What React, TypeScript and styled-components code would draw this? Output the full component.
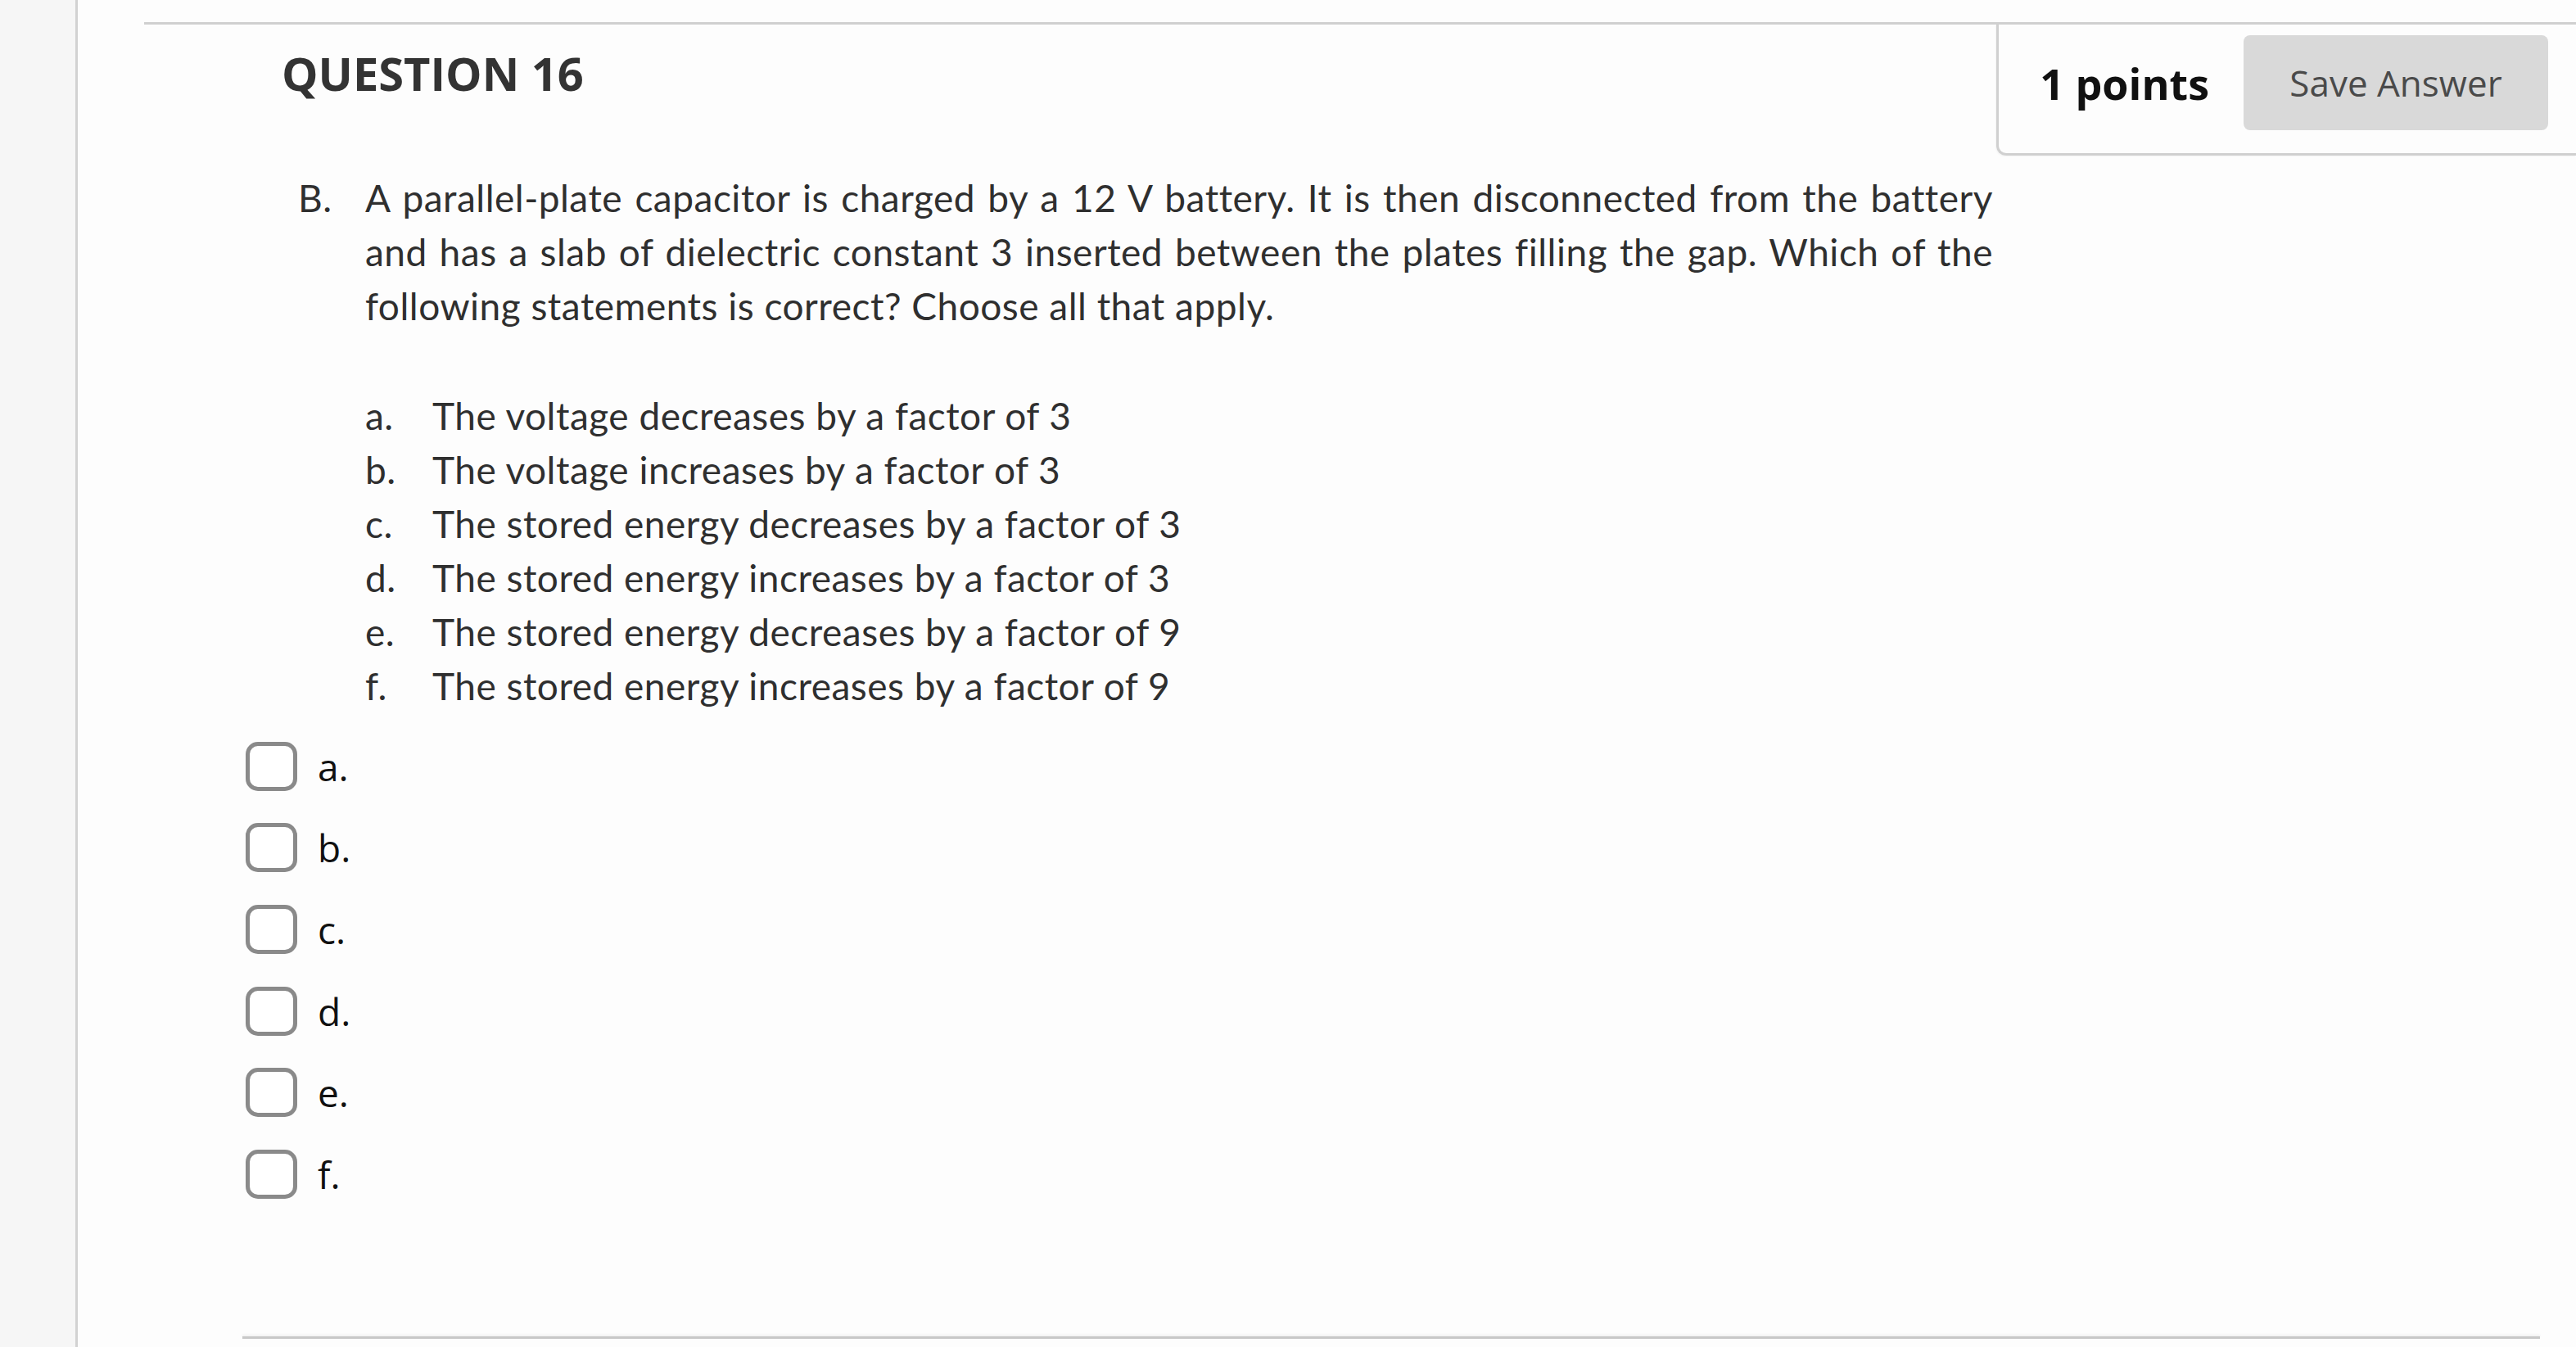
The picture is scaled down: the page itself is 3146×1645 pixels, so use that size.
import React from "react";
import styled, { createGlobalStyle } from "styled-components";

const statements = [
  { mark: "a.", text: "The voltage decreases by a factor of 3" },
  { mark: "b.", text: "The voltage increases by a factor of 3" },
  { mark: "c.", text: "The stored energy decreases by a factor of 3" },
  { mark: "d.", text: "The stored energy increases by a factor of 3" },
  { mark: "e.", text: "The stored energy decreases by a factor of 9" },
  { mark: "f.", text: "The stored energy increases by a factor of 9" },
];

const questionLines = [
  "A parallel-plate capacitor is charged by a 12 V battery. It is then disconnected from the battery",
  "and has a slab of dielectric constant 3 inserted between the plates filling the gap. Which of the",
  "following statements is correct? Choose all that apply.",
];

const choices = ["a.", "b.", "c.", "d.", "e.", "f."];

const App: React.FC = () => {
  return (
    <>
      <GlobalStyle />
      <Page>
        <Sidebar />
        <Main>
          <Panel>
            <Header>
              <Title>QUESTION 16</Title>
              <PointsBox>
                <Points>1 points</Points>
                <SaveButton type="button">Save Answer</SaveButton>
              </PointsBox>
            </Header>

            <Prompt>
              <Marker>B.</Marker>
              <PromptText>
                {questionLines.map((line, i) => (
                  <Line key={line} $justify={i < questionLines.length - 1}>
                    {line}
                  </Line>
                ))}
              </PromptText>
            </Prompt>

            <Statements>
              {statements.map((s) => (
                <StatementRow key={s.mark}>
                  <Marker>{s.mark}</Marker>
                  <span>{s.text}</span>
                </StatementRow>
              ))}
            </Statements>

            <Choices>
              {choices.map((c) => (
                <Choice key={c}>
                  <Box type="checkbox" aria-label={c} />
                  <ChoiceLabel>{c}</ChoiceLabel>
                </Choice>
              ))}
            </Choices>
          </Panel>
          <BottomRule />
        </Main>
      </Page>
    </>
  );
};

export default App;

const GlobalStyle = createGlobalStyle`
  html, body {
    margin: 0;
    padding: 0;
    height: 100%;
    overflow: hidden;
    background: #fdfdfd;
  }
  #root {
    height: 100%;
  }
`;

const Page = styled.div`
  display: flex;
  height: 100vh;
  font-family: "Open Sans", sans-serif;
`;

const Sidebar = styled.div`
  width: 92px;
  flex-shrink: 0;
  background: #f6f6f6;
  border-right: 3px solid #d2d2d2;
`;

const Main = styled.div`
  flex: 1;
  display: flex;
  flex-direction: column;
  background: #fdfdfd;
`;

const Panel = styled.div`
  margin: 27px 0 0 81px;
  border-top: 3px solid #d0d0d0;
`;

const Header = styled.div`
  display: flex;
  justify-content: space-between;
  align-items: flex-start;
`;

const Title = styled.h2`
  margin: 0;
  padding: 27px 0 0 168px;
  font-size: 56px;
  line-height: 64px;
  font-weight: 700;
  color: #333;
`;

const PointsBox = styled.div`
  display: flex;
  align-items: center;
  gap: 42px;
  padding: 13px 34px 28px 50px;
  border-left: 3px solid #d0d0d0;
  border-bottom: 3px solid #d0d0d0;
  border-bottom-left-radius: 12px;
  box-shadow: -1px 1px 2px rgba(0, 0, 0, 0.04);
`;

const Points = styled.span`
  font-size: 52px;
  font-weight: 700;
  color: #111;
`;

const SaveButton = styled.button`
  width: 372px;
  height: 116px;
  border: none;
  border-radius: 8px;
  background: #d9d9d9;
  font-family: "Open Sans", sans-serif;
  font-size: 44px;
  color: #4a4a4a;
`;

const Prompt = styled.div`
  display: flex;
  margin: 19px 0 0 188px;
  font-family: Lato, sans-serif;
  font-size: 46px;
  letter-spacing: 0.5px;
  line-height: 66px;
  color: #2f2f2f;
`;

const Marker = styled.span`
  width: 82px;
  flex-shrink: 0;
`;

const PromptText = styled.div`
  display: flex;
  flex-direction: column;
  width: 1988px;
`;

const Line = styled.span<{ $justify: boolean }>`
  white-space: nowrap;
  text-align: ${(p) => (p.$justify ? "justify" : "left")};
  text-align-last: ${(p) => (p.$justify ? "justify" : "left")};
`;

const Statements = styled.div`
  margin: 68px 0 0 270px;
  font-family: Lato, sans-serif;
  font-size: 46px;
  letter-spacing: 0.5px;
  line-height: 66px;
  color: #2f2f2f;
`;

const StatementRow = styled.div`
  display: flex;
  white-space: nowrap;
`;

const Choices = styled.div`
  margin: 15px 0 0 124px;
  display: flex;
  flex-direction: column;
`;

const Choice = styled.label`
  display: flex;
  align-items: center;
  gap: 25px;
  height: 99.6px;
`;

const Box = styled.input`
  appearance: none;
  margin: 0;
  width: 63px;
  height: 60px;
  border: 5px solid #8a8a8a;
  border-radius: 15px;
  background: #fff;
  box-sizing: border-box;
`;

const ChoiceLabel = styled.span`
  font-size: 46px;
  line-height: 54px;
  color: #111;
`;

const BottomRule = styled.div`
  margin: 148px 0 0 201px;
  width: 2806px;
  height: 3px;
  background: #c8c8c8;
  box-shadow: 0 -2px 3px #f0f0f0;
`;
